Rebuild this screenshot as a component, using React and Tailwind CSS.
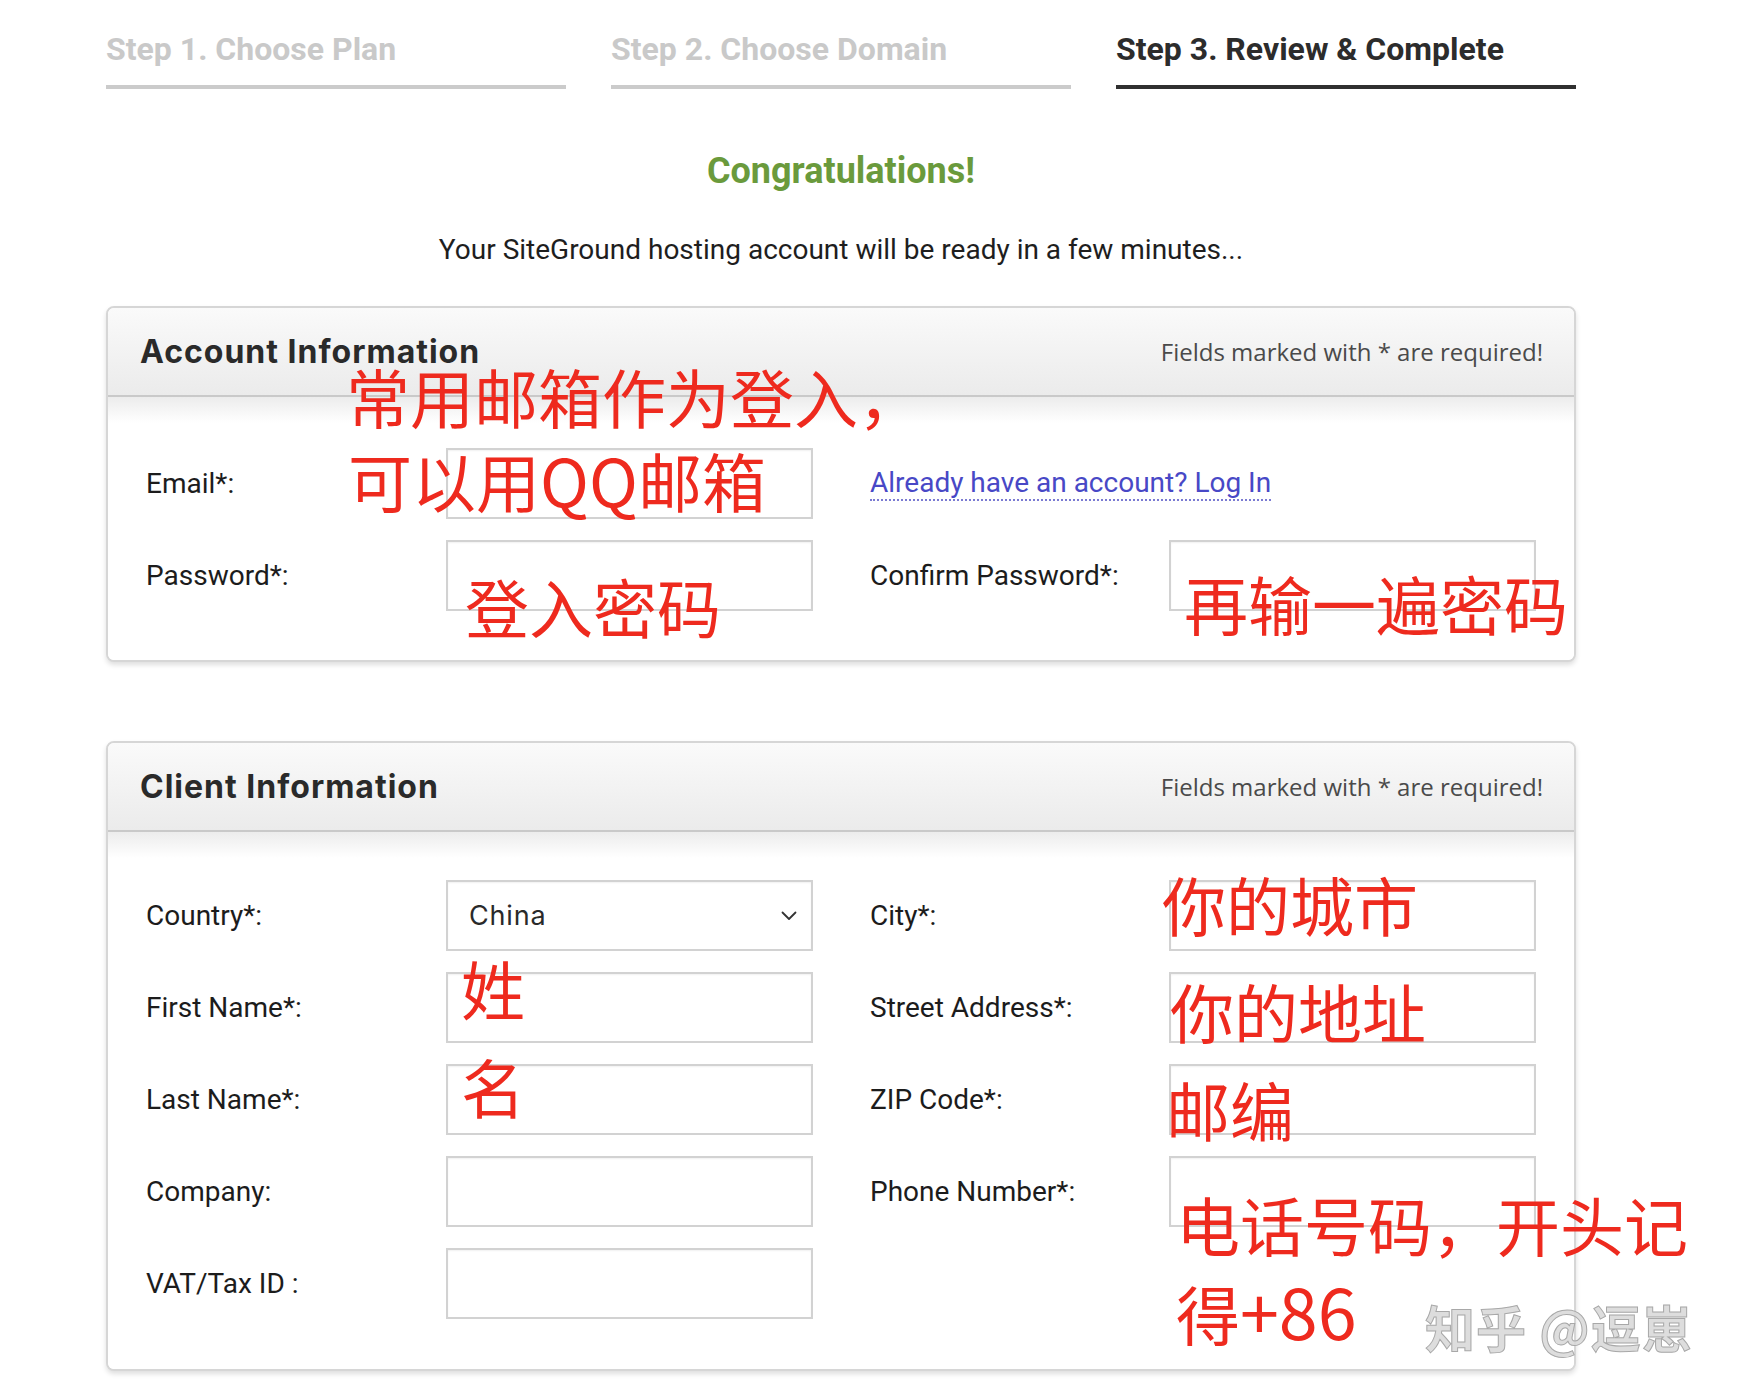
import React from "react";

function TextInput() {
  return (
    <div className="h-[71px] w-[367px] border-2 border-[#d2d2d2] bg-white shadow-[inset_0_1px_2px_rgba(0,0,0,0.06)]" />
  );
}

function Field({ label, right, children }) {
  return (
    <div className="flex items-center">
      <div
        className={
          (right ? "w-[299px]" : "w-[300px]") +
          " text-[28px] leading-[32px] text-[#1c1c1c]"
        }
      >
        {label}
      </div>
      {children ?? <TextInput />}
    </div>
  );
}

function Card({ title, bodyPad, children }) {
  return (
    <div className="overflow-hidden rounded-[8px] border-2 border-[#d6d6d6] bg-white shadow-[0_3px_5px_rgba(0,0,0,0.13)]">
      <div className="flex h-[89px] items-center justify-between border-b-2 border-[#c9c9c9] bg-[linear-gradient(to_bottom,#fafafa,#ebebeb)] pl-[32px] pr-[31px]">
        <h2 className="font-['Inter',sans-serif] text-[32px] font-bold leading-none tracking-[1px] text-[#2a2a2a]">
          {title}
        </h2>
        <span className="font-['Open_Sans',sans-serif] text-[24px] leading-none text-[#4a4a4a]">
          Fields marked with * are required!
        </span>
      </div>
      <div
        className={
          "grid grid-cols-[667px_666px] gap-x-[57px] gap-y-[21px] bg-[linear-gradient(to_bottom,#ececec,#ffffff_26px)] pl-[38px] pr-[38px] " +
          bodyPad
        }
      >
        {children}
      </div>
    </div>
  );
}

export default function App() {
  return (
    <div className="relative min-h-[1399px] w-full overflow-hidden bg-white font-['Roboto',sans-serif]">
      <div className="ml-[106px] w-[1470px] pt-[30px]">
        {/* Steps */}
        <div className="grid grid-cols-3 gap-x-[45px]">
          <div>
            <div className="text-[32px] font-bold leading-[38px] text-[#c9c9c9]">
              Step 1. Choose Plan
            </div>
            <div className="mt-[17px] h-[4px] bg-[#cbcbcb]" />
          </div>
          <div>
            <div className="text-[32px] font-bold leading-[38px] text-[#c9c9c9]">
              Step 2. Choose Domain
            </div>
            <div className="mt-[17px] h-[4px] bg-[#cbcbcb]" />
          </div>
          <div>
            <div className="text-[32px] font-bold leading-[38px] text-[#2c2c2c]">
              Step 3. Review &amp; Complete
            </div>
            <div className="mt-[17px] h-[4px] bg-[#303030]" />
          </div>
        </div>

        <h1 className="mt-[61px] text-center text-[36px] font-bold leading-[42px] text-[#6a9a3c]">
          Congratulations!
        </h1>
        <p className="mt-[42px] text-center text-[28px] leading-[32px] text-[#1e1e1e]">
          Your SiteGround hosting account will be ready in a few minutes...
        </p>

        <div className="mt-[40px]">
          <Card title="Account Information" bodyPad="pt-[51px] pb-[49px]">
            <Field label="Email*:" />
            <div className="flex items-center">
              <a className="border-b-2 border-dotted border-[#7b7bd2] text-[28px] leading-[32px] text-[#4848c6]">
                Already have an account? Log In
              </a>
            </div>
            <Field label="Password*:" />
            <Field label="Confirm Password*:" right />
          </Card>
        </div>

        <div className="mt-[79px]">
          <Card title="Client Information" bodyPad="pt-[48px] pb-[50px]">
            <Field label="Country*:">
              <div className="flex h-[71px] w-[367px] items-center justify-between border-2 border-[#d2d2d2] bg-white pl-[21px] pr-[14px] shadow-[inset_0_1px_2px_rgba(0,0,0,0.06)]">
                <span className="font-['Inter',sans-serif] text-[27px] leading-none tracking-[0.8px] text-[#2a2a2a]">
                  China
                </span>
                <svg width="16" height="10" viewBox="0 0 16 10" fill="none">
                  <polyline
                    points="1.5,1.5 8,8 14.5,1.5"
                    stroke="#333"
                    strokeWidth="1.8"
                    strokeLinecap="round"
                    strokeLinejoin="round"
                  />
                </svg>
              </div>
            </Field>
            <Field label="City*:" right />
            <Field label="First Name*:" />
            <Field label="Street Address*:" right />
            <Field label="Last Name*:" />
            <Field label="ZIP Code*:" right />
            <Field label="Company:" />
            <Field label="Phone Number*:" right />
            <Field label="VAT/Tax ID :" />
            <div />
          </Card>
        </div>
      </div>

      {/* Red annotations drawn over the form */}
      <div className="pointer-events-none font-['Noto_Sans_CJK_SC',sans-serif] text-[64px] leading-none text-[#ee2a1e]">
        <div className="absolute left-[346px] top-[363px] whitespace-nowrap">常用邮箱作为登入，</div>
        <div className="absolute left-[348px] top-[445px] whitespace-nowrap">
          可以用<span className="text-[66px]">QQ</span>邮箱
        </div>
        <div className="absolute left-[465px] top-[573px] whitespace-nowrap">登入密码</div>
        <div className="absolute left-[1184px] top-[570px] whitespace-nowrap">再输一遍密码</div>
        <div className="absolute left-[1162px] top-[871px] whitespace-nowrap">你的城市</div>
        <div className="absolute left-[461px] top-[955px] whitespace-nowrap">姓</div>
        <div className="absolute left-[461px] top-[1053px] whitespace-nowrap">名</div>
        <div className="absolute left-[1170px] top-[978px] whitespace-nowrap">你的地址</div>
        <div className="absolute left-[1166px] top-[1076px] whitespace-nowrap">邮编</div>
        <div className="absolute left-[1176px] top-[1191px] whitespace-nowrap">电话号码，开头记</div>
        <div className="absolute left-[1176px] top-[1275px] whitespace-nowrap">
          得<span className="text-[70px]">+86</span>
        </div>
      </div>

      {/* Watermark */}
      <div className="pointer-events-none absolute left-[1425px] top-[1301px] whitespace-nowrap font-['Noto_Sans_CJK_SC',sans-serif] text-[50px] font-bold leading-none tracking-[1px] text-[rgba(215,215,215,0.85)] [-webkit-text-stroke:1px_#a8a8a8]">
        知乎 @逗崽
      </div>
    </div>
  );
}
